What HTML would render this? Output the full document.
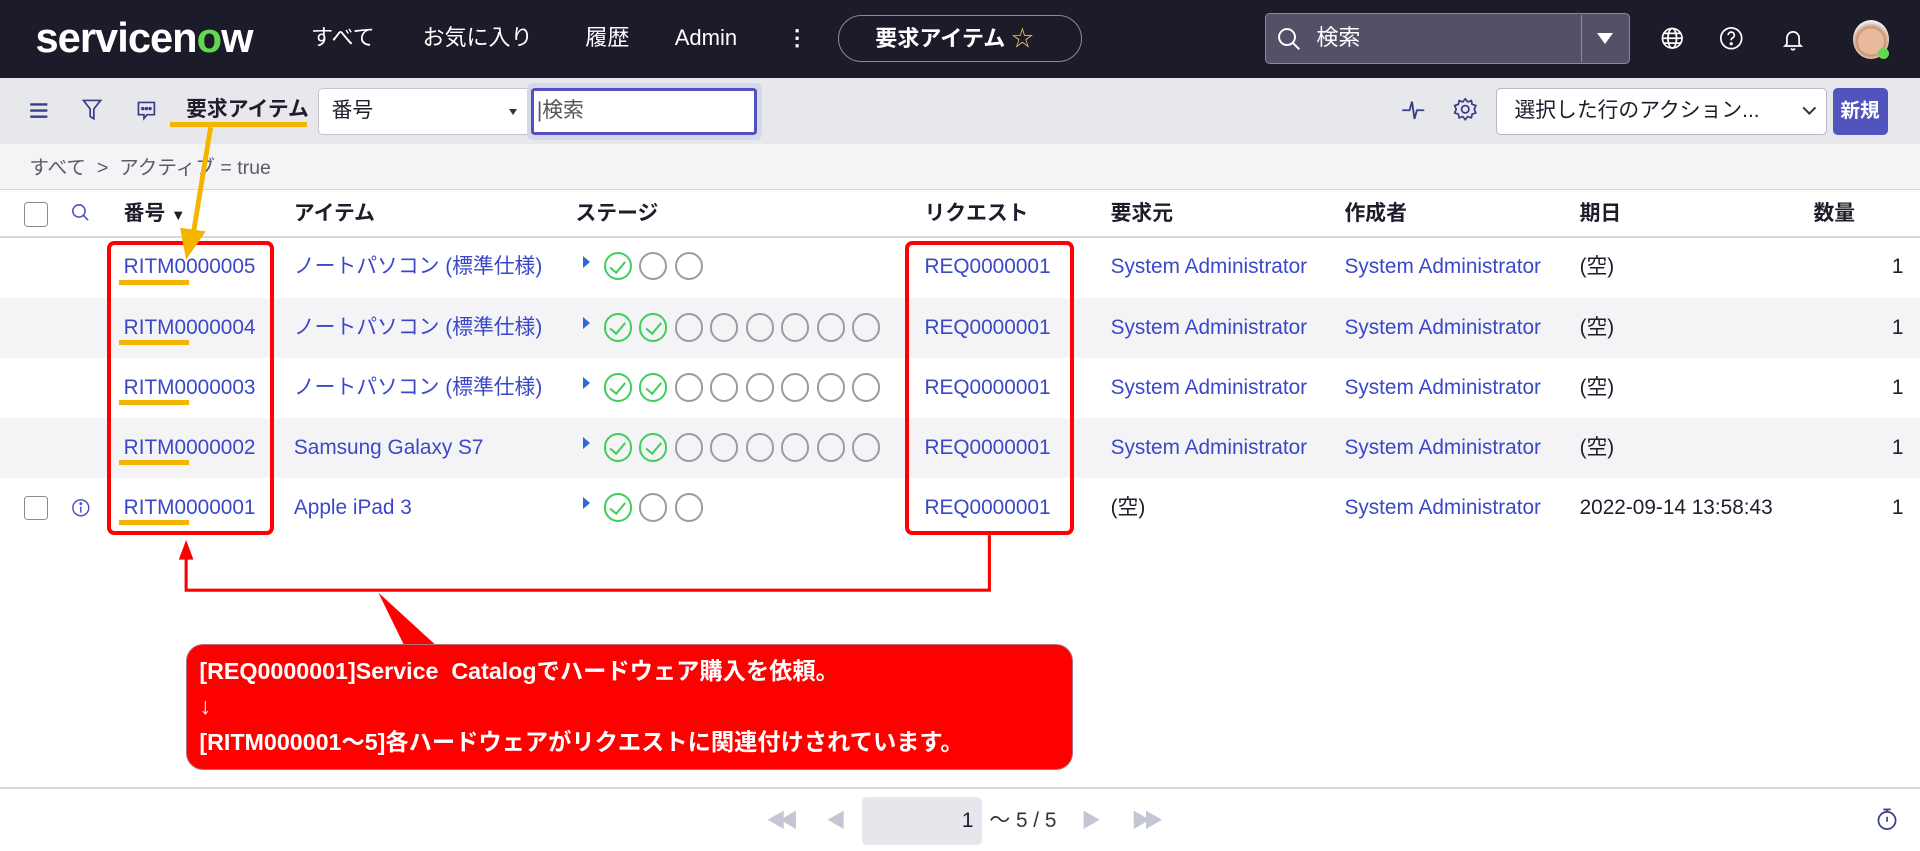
<!DOCTYPE html>
<html><head><meta charset="utf-8"><style>
html{zoom:1.22449}
*{box-sizing:border-box;margin:0;padding:0}
body{width:1568px;height:695px;overflow:hidden;position:relative;background:#fff;font-family:"Liberation Sans","Noto Sans CJK JP",sans-serif;color:#1d1d2b;line-height:20px}
.a{position:absolute}
.hdr{left:0;top:0;width:1568px;height:64px;background:#1c1b29}
.nav{color:#fff;font-size:18px;top:21px}
.tb{left:0;top:64px;width:1568px;height:54px;background:#e6e8ec}
.bc{left:0;top:118px;width:1568px;height:37px;background:#f4f4f6;border-bottom:1px solid #d8d8dc}
.th{top:165px;font-size:17px;font-weight:bold}
.row{left:0;width:1568px;height:49px}
.lk{color:#3a48c8;font-size:17px}
.tx{font-size:17px}
.c{position:absolute;width:23px;height:23px;border-radius:50%;border:2px solid #9a9ca4}
.c.g{border-color:#3fcf5a}
.c.g:after{content:"";position:absolute;left:6px;top:3px;width:6px;height:11px;border:solid #3fcf5a;border-width:0 2px 2px 0;transform:rotate(40deg)}
.tri{width:0;height:0;border-left:6px solid #2a6ae0;border-top:5px solid transparent;border-bottom:5px solid transparent}
.ul{width:57px;height:4px;background:#f5b400}
</style></head><body>
<div class="a hdr"></div>
<div class="a" style="left:29px;top:12px;color:#fff;font-size:34px;line-height:38px;font-weight:bold;letter-spacing:-0.8px">servicen<span style="color:#62d84e">o</span>w</div>
<div class="a nav" style="left:254px">すべて</div>
<div class="a nav" style="left:345px">お気に入り</div>
<div class="a nav" style="left:478px">履歴</div>
<div class="a nav" style="left:551px">Admin</div>
<div class="a nav" style="left:642px;font-weight:bold">⋮</div>
<div class="a" style="left:684px;top:12px;width:200px;height:39px;border:1px solid #8a8a99;border-radius:20px;color:#fff;font-size:18px;font-weight:bold;padding:9px 0 0 30px">要求アイテム <span style="color:#f2c45a;font-weight:normal">☆</span></div>
<div class="a" style="left:1033px;top:11px;width:298px;height:41px;background:#535168;border:1px solid #8b89a0;border-radius:4px"></div>
<div class="a" style="left:1291px;top:12px;width:1px;height:39px;background:#8b89a0"></div>
<svg class="a" style="left:1042px;top:21px" width="22" height="22"><circle cx="9" cy="9" r="6.5" fill="none" stroke="#fff" stroke-width="1.6"/><line x1="14" y1="14" x2="19" y2="19" stroke="#fff" stroke-width="1.6"/></svg>
<div class="a" style="left:1075px;top:21px;color:#fff;font-size:18px">検索</div>
<div class="a" style="left:1304px;top:27px;border-top:9px solid #fff;border-left:7px solid transparent;border-right:7px solid transparent"></div>
<svg class="a" style="left:1356px;top:21px" width="20" height="20" fill="none" stroke="#fff" stroke-width="1.4"><circle cx="10" cy="10" r="8"/><ellipse cx="10" cy="10" rx="3.5" ry="8"/><line x1="2" y1="10" x2="18" y2="10"/><line x1="3" y1="6" x2="17" y2="6"/><line x1="3" y1="14" x2="17" y2="14"/></svg>
<svg class="a" style="left:1404px;top:21px" width="20" height="20" fill="none" stroke="#fff" stroke-width="1.4"><circle cx="10" cy="10" r="8.5"/><path d="M7.5 7.5a2.5 2.5 0 1 1 3.5 2.3c-.8.4-1 1-1 1.8"/><circle cx="10" cy="14.5" r=".6" fill="#fff"/></svg>
<svg class="a" style="left:1455px;top:22px" width="18" height="20" fill="none" stroke="#fff" stroke-width="1.4"><path d="M4 14V9a5 5 0 0 1 10 0v5l1.5 1.5h-13z"/><path d="M7.5 17.5a1.6 1.6 0 0 0 3 0"/></svg>
<div class="a" style="left:1513px;top:16px;width:30px;height:32px;border-radius:50%;background:radial-gradient(circle at 50% 55%,#e9b99d 0 45%,#c89070 50%,#f0efee 70%)"></div>
<div class="a" style="left:1534px;top:39px;width:9px;height:9px;border-radius:50%;background:#62d84e"></div>

<div class="a tb"></div>
<svg class="a" style="left:24px;top:83px" width="16" height="14" stroke="#3a3c8a" stroke-width="2"><line x1="1" y1="2" x2="15" y2="2"/><line x1="1" y1="7" x2="15" y2="7"/><line x1="1" y1="12" x2="15" y2="12"/></svg>
<svg class="a" style="left:66px;top:80px" width="18" height="20" fill="none" stroke="#3a3c8a" stroke-width="1.4"><path d="M2 2h14l-5.5 7v8l-3-2v-6z"/></svg>
<svg class="a" style="left:111px;top:82px" width="17" height="17" fill="none" stroke="#3a3c8a" stroke-width="1.4"><path d="M2 2h13v10H9l-2.5 3v-3H2z"/><circle cx="5.5" cy="7" r=".7" fill="#3a3c8a"/><circle cx="8.5" cy="7" r=".7" fill="#3a3c8a"/><circle cx="11.5" cy="7" r=".7" fill="#3a3c8a"/></svg>
<div class="a" style="left:152px;top:80px;font-size:17px;font-weight:bold">要求アイテム</div>
<div class="a" style="left:139px;top:100px;width:112px;height:4px;background:#f5b400"></div>
<div class="a" style="left:260px;top:72px;width:172px;height:38px;background:#fff;border:1px solid #c4c6cc;border-radius:4px 0 0 4px;font-size:17px;padding:8px 0 0 10px">番号</div>
<div class="a" style="left:416px;top:89px;border-top:5px solid #333;border-left:4px solid transparent;border-right:4px solid transparent"></div>
<div class="a" style="left:430px;top:68px;width:192px;height:46px;background:#d6d8e6;border-radius:5px"></div>
<div class="a" style="left:434px;top:72px;width:184px;height:38px;background:#fff;border:3px solid #4f52c0;border-radius:3px;font-size:17px;color:#555;padding:6px 0 0 2px">|検索</div>
<svg class="a" style="left:1144px;top:80px" width="20" height="20" fill="none" stroke="#3a3c8a" stroke-width="1.5"><path d="M1 10h6l2-7 2 14 2-7h6"/></svg>
<svg class="a" style="left:1187px;top:79px" width="20" height="20" fill="none" stroke="#3a3c8a" stroke-width="1.4"><circle cx="10" cy="10" r="3"/><path d="M10 1.5l2 2.5 3-1 .6 3 3 1-1.2 3 1.2 3-3 1-.6 3-3-1-2 2.5-2-2.5-3 1-.6-3-3-1 1.2-3-1.2-3 3-1 .6-3 3 1z"/></svg>
<div class="a" style="left:1222px;top:72px;width:270px;height:38px;background:#fff;border:1px solid #b8bac2;border-radius:4px;font-size:17px;padding:8px 0 0 14px">選択した行のアクション...</div>
<svg class="a" style="left:1472px;top:86px" width="12" height="10" fill="none" stroke="#333" stroke-width="1.6"><path d="M1 2l5 5 5-5"/></svg>
<div class="a" style="left:1497px;top:72px;width:45px;height:38px;background:#5254bd;border-radius:4px;color:#fff;font-size:16px;font-weight:bold;padding:9px 0 0 6px">新規</div>

<div class="a bc"></div>
<div class="a" style="left:24px;top:127px;font-size:16px;color:#5a5b66">すべて &nbsp;&gt; &nbsp;アクティブ = true</div>

<div class="a" style="left:0;top:193px;width:1568px;height:1px;background:#d8d8dc"></div>
<div class="a" style="left:20px;top:165px;width:19px;height:20px;border:1.5px solid #8a8c94;border-radius:3px;background:#fff"></div>
<svg class="a" style="left:58px;top:166px" width="16" height="16" fill="none" stroke="#4f52c0" stroke-width="1.3"><circle cx="6.5" cy="6.5" r="5"/><line x1="10" y1="10" x2="14" y2="14"/></svg>
<div class="a th" style="left:101px">番号 <span style="font-size:12px">▼</span></div>
<div class="a th" style="left:240px">アイテム</div>
<div class="a th" style="left:470px">ステージ</div>
<div class="a th" style="left:755px">リクエスト</div>
<div class="a th" style="left:907px">要求元</div>
<div class="a th" style="left:1098px">作成者</div>
<div class="a th" style="left:1290px">期日</div>
<div class="a th" style="left:1481px">数量</div>

<div class="a row" style="top:194px"></div>
<div class="a row" style="top:243px;background:#f4f4f6"></div>
<div class="a row" style="top:292px"></div>
<div class="a row" style="top:341px;background:#f4f4f6"></div>
<div class="a row" style="top:390px"></div>

<div class="a lk" style="left:101px;top:208px">RITM0000005</div>
<div class="a lk" style="left:101px;top:258px">RITM0000004</div>
<div class="a lk" style="left:101px;top:307px">RITM0000003</div>
<div class="a lk" style="left:101px;top:356px">RITM0000002</div>
<div class="a lk" style="left:101px;top:405px">RITM0000001</div>
<div class="a ul" style="left:97px;top:229px"></div>
<div class="a ul" style="left:97px;top:278px"></div>
<div class="a ul" style="left:97px;top:327px"></div>
<div class="a ul" style="left:97px;top:376px"></div>
<div class="a ul" style="left:97px;top:425px"></div>

<div class="a lk" style="left:240px;top:208px">ノートパソコン (標準仕様)</div>
<div class="a lk" style="left:240px;top:258px">ノートパソコン (標準仕様)</div>
<div class="a lk" style="left:240px;top:307px">ノートパソコン (標準仕様)</div>
<div class="a lk" style="left:240px;top:356px">Samsung Galaxy S7</div>
<div class="a lk" style="left:240px;top:405px">Apple iPad 3</div>

<div class="a tri" style="left:476px;top:209px"></div>
<div class="a tri" style="left:476px;top:259px"></div>
<div class="a tri" style="left:476px;top:308px"></div>
<div class="a tri" style="left:476px;top:357px"></div>
<div class="a tri" style="left:476px;top:406px"></div>
<div class="a" style="left:493px;top:206px;width:90px;height:24px">
<div class="c g" style="left:0"></div><div class="c" style="left:29px"></div><div class="c" style="left:58px"></div></div>
<div class="a" style="left:493px;top:256px;width:240px;height:24px">
<div class="c g" style="left:0"></div><div class="c g" style="left:29px"></div><div class="c" style="left:58px"></div><div class="c" style="left:87px"></div><div class="c" style="left:116px"></div><div class="c" style="left:145px"></div><div class="c" style="left:174px"></div><div class="c" style="left:203px"></div></div>
<div class="a" style="left:493px;top:305px;width:240px;height:24px">
<div class="c g" style="left:0"></div><div class="c g" style="left:29px"></div><div class="c" style="left:58px"></div><div class="c" style="left:87px"></div><div class="c" style="left:116px"></div><div class="c" style="left:145px"></div><div class="c" style="left:174px"></div><div class="c" style="left:203px"></div></div>
<div class="a" style="left:493px;top:354px;width:240px;height:24px">
<div class="c g" style="left:0"></div><div class="c g" style="left:29px"></div><div class="c" style="left:58px"></div><div class="c" style="left:87px"></div><div class="c" style="left:116px"></div><div class="c" style="left:145px"></div><div class="c" style="left:174px"></div><div class="c" style="left:203px"></div></div>
<div class="a" style="left:493px;top:403px;width:90px;height:24px">
<div class="c g" style="left:0"></div><div class="c" style="left:29px"></div><div class="c" style="left:58px"></div></div>

<div class="a lk" style="left:755px;top:208px">REQ0000001</div>
<div class="a lk" style="left:755px;top:258px">REQ0000001</div>
<div class="a lk" style="left:755px;top:307px">REQ0000001</div>
<div class="a lk" style="left:755px;top:356px">REQ0000001</div>
<div class="a lk" style="left:755px;top:405px">REQ0000001</div>

<div class="a lk" style="left:907px;top:208px">System Administrator</div>
<div class="a lk" style="left:907px;top:258px">System Administrator</div>
<div class="a lk" style="left:907px;top:307px">System Administrator</div>
<div class="a lk" style="left:907px;top:356px">System Administrator</div>
<div class="a tx" style="left:907px;top:405px">(空)</div>
<div class="a lk" style="left:1098px;top:208px">System Administrator</div>
<div class="a lk" style="left:1098px;top:258px">System Administrator</div>
<div class="a lk" style="left:1098px;top:307px">System Administrator</div>
<div class="a lk" style="left:1098px;top:356px">System Administrator</div>
<div class="a lk" style="left:1098px;top:405px">System Administrator</div>
<div class="a tx" style="left:1290px;top:208px">(空)</div>
<div class="a tx" style="left:1290px;top:258px">(空)</div>
<div class="a tx" style="left:1290px;top:307px">(空)</div>
<div class="a tx" style="left:1290px;top:356px">(空)</div>
<div class="a tx" style="left:1290px;top:405px">2022-09-14 13:58:43</div>
<div class="a tx" style="left:1545px;top:208px">1</div>
<div class="a tx" style="left:1545px;top:258px">1</div>
<div class="a tx" style="left:1545px;top:307px">1</div>
<div class="a tx" style="left:1545px;top:356px">1</div>
<div class="a tx" style="left:1545px;top:405px">1</div>

<div class="a" style="left:20px;top:405px;width:19px;height:20px;border:1.5px solid #8a8c94;border-radius:3px;background:#fff"></div>
<svg class="a" style="left:58px;top:407px" width="16" height="16" fill="none" stroke="#4f52c0" stroke-width="1.2"><circle cx="8" cy="8" r="6.5"/><line x1="8" y1="7" x2="8" y2="12"/><circle cx="8" cy="4.6" r=".6" fill="#4f52c0"/></svg>

<div class="a" style="left:87px;top:197px;width:137px;height:240px;border:4px solid #f00;border-radius:6px"></div>
<div class="a" style="left:739px;top:197px;width:138px;height:240px;border:4px solid #f00;border-radius:6px"></div>
<svg class="a" style="left:0;top:0" width="1568" height="695">
<line x1="172" y1="104" x2="158" y2="190" stroke="#f5b400" stroke-width="4"/>
<polygon points="147,186 168,189 152,212" fill="#f5b400"/>
<polyline points="808,437 808,482 152,482 152,455" fill="none" stroke="#f00" stroke-width="2.5"/>
<polygon points="146,457 158,457 152,441" fill="#f00"/>
<polygon points="309,484 330,527 356,527" fill="#f00"/>
</svg>
<div class="a" style="left:152px;top:526px;width:724px;height:103px;background:#f00;border:1px solid #b0707a;border-radius:14px;color:#fff;font-size:19px;font-weight:bold;line-height:29px;padding:7px 0 0 10px">[REQ0000001]Service&nbsp; Catalogでハードウェア購入を依頼。<br><span style="font-weight:normal">↓</span><br>[RITM000001～5]各ハードウェアがリクエストに関連付けされています。</div>

<div class="a" style="left:0;top:643px;width:1568px;height:1px;background:#d8d8dc"></div>
<div class="a" style="left:626px;top:661px;color:#c4c6d4;font-size:16px;letter-spacing:-6px">◀◀</div>
<div class="a" style="left:675px;top:661px;color:#c4c6d4;font-size:16px">◀</div>
<div class="a" style="left:704px;top:651px;width:98px;height:39px;background:#e5e7ec;border-radius:4px;font-size:17px;text-align:right;padding:10px 7px 0 0">1</div>
<div class="a tx" style="left:808px;top:661px;color:#333">～ 5 / 5</div>
<div class="a" style="left:883px;top:661px;color:#c4c6d4;font-size:16px">▶</div>
<div class="a" style="left:924px;top:661px;color:#c4c6d4;font-size:16px;letter-spacing:-6px">▶▶</div>
<svg class="a" style="left:1532px;top:659px" width="18" height="20" fill="none" stroke="#3a3c8a" stroke-width="1.4"><circle cx="9" cy="11" r="7"/><line x1="6" y1="2" x2="12" y2="2"/><line x1="9" y1="2" x2="9" y2="4"/><line x1="9" y1="8" x2="9" y2="12"/></svg>
</body></html>
